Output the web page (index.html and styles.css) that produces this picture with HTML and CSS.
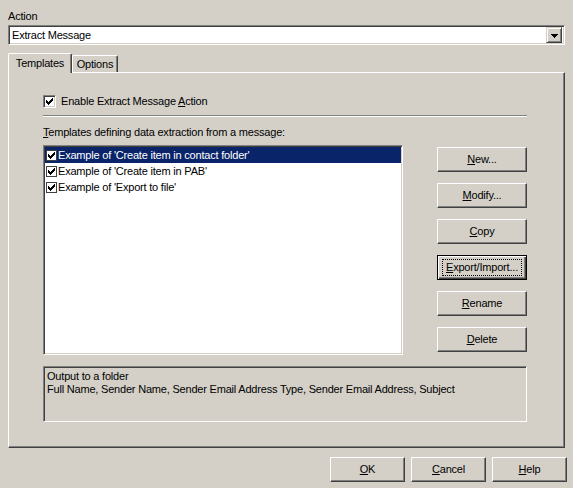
FILE: index.html
```html
<!DOCTYPE html>
<html>
<head>
<meta charset="utf-8">
<link rel="stylesheet" href="styles.css">
</head>
<body>
<div class="dialog">
  <div class="field-label">Action</div>
  <div class="combo">
    <span class="combo-text">Extract Message</span>
    <span class="combo-btn"><svg width="7" height="4" viewBox="0 0 7 4" shape-rendering="crispEdges"><path d="M0 0h7v1H0zM1 1h5v1H1zM2 2h3v1H2zM3 3h1v1H3z" fill="#000"/></svg></span>
  </div>
  <div class="tabs">
    <div class="tab active">Templates</div>
    <div class="tab">Options</div>
  </div>
  <div class="panel">
    <div class="check-row">
      <span class="checkbox"><svg width="7" height="7" viewBox="0 0 7 7" shape-rendering="crispEdges"><path d="M0 2h1v3H0zM1 3h1v3H1zM2 4h1v3H2zM3 3h1v3H3zM4 2h1v3H4zM5 1h1v3H5zM6 0h1v3H6z" fill="#000"/></svg></span>
      <span>Enable Extract Message <u>A</u>ction</span>
    </div>
    <div class="separator"></div>
    <div class="list-label"><u>T</u>emplates defining data extraction from a message:</div>
    <div class="main-row">
      <div class="list">
        <div class="item selected"><span class="mini-check"><svg width="7" height="7" viewBox="0 0 7 7" shape-rendering="crispEdges"><path d="M0 2h1v3H0zM1 3h1v3H1zM2 4h1v3H2zM3 3h1v3H3zM4 2h1v3H4zM5 1h1v3H5zM6 0h1v3H6z" fill="#000"/></svg></span><span class="item-text">Example of 'Create item in contact folder'</span></div>
        <div class="item"><span class="mini-check"><svg width="7" height="7" viewBox="0 0 7 7" shape-rendering="crispEdges"><path d="M0 2h1v3H0zM1 3h1v3H1zM2 4h1v3H2zM3 3h1v3H3zM4 2h1v3H4zM5 1h1v3H5zM6 0h1v3H6z" fill="#000"/></svg></span><span class="item-text">Example of 'Create item in PAB'</span></div>
        <div class="item"><span class="mini-check"><svg width="7" height="7" viewBox="0 0 7 7" shape-rendering="crispEdges"><path d="M0 2h1v3H0zM1 3h1v3H1zM2 4h1v3H2zM3 3h1v3H3zM4 2h1v3H4zM5 1h1v3H5zM6 0h1v3H6z" fill="#000"/></svg></span><span class="item-text">Example of 'Export to file'</span></div>
      </div>
      <div class="side-buttons">
        <div class="btn"><span><u>N</u>ew...</span></div>
        <div class="btn"><span><u>M</u>odify...</span></div>
        <div class="btn"><span><u>C</u>opy</span></div>
        <div class="btn default"><span class="focus"><u>E</u>xport/Import...</span></div>
        <div class="btn"><span><u>R</u>ename</span></div>
        <div class="btn"><span><u>D</u>elete</span></div>
      </div>
    </div>
    <div class="desc">Output to a folder<br>Full Name, Sender Name, Sender Email Address Type, Sender Email Address, Subject</div>
  </div>
  <div class="footer">
    <div class="btn wide"><span><u>O</u>K</span></div>
    <div class="btn wide"><span><u>C</u>ancel</span></div>
    <div class="btn wide"><span><u>H</u>elp</span></div>
  </div>
</div>
</body>
</html>
```
FILE: styles.css
```css
html, body {
  margin: 0;
  padding: 0;
}
body {
  width: 573px;
  height: 488px;
  background: #d4d0c8;
  font-family: "Liberation Sans", Arial, sans-serif;
  font-size: 11px;
  letter-spacing: -0.2px;
  color: #000;
  overflow: hidden;
}
u {
  text-decoration: underline;
  text-underline-offset: 1px;
}
.dialog {
  padding: 10px 8px 0 8px;
}
.field-label {
  height: 13px;
  line-height: 13px;
  margin-bottom: 2px;
}
.combo {
  box-sizing: border-box;
  height: 20px;
  display: flex;
  align-items: center;
  background: #fff;
  border-top: 1px solid #808080;
  border-left: 1px solid #808080;
  border-right: 1px solid #fff;
  border-bottom: 1px solid #fff;
  box-shadow: inset 1px 1px 0 #404040, inset -1px -1px 0 #d4d0c8;
  padding: 2px 2px 2px 3px;
}
.combo-text {
  flex: 1;
  line-height: 16px;
}
.combo-btn {
  box-sizing: border-box;
  width: 16px;
  height: 16px;
  background: #d4d0c8;
  border-top: 1px solid #d4d0c8;
  border-left: 1px solid #d4d0c8;
  border-right: 1px solid #404040;
  border-bottom: 1px solid #404040;
  box-shadow: inset 1px 1px 0 #fff, inset -1px -1px 0 #808080;
  display: flex;
  align-items: center;
  justify-content: center;
  padding-top: 1px;
}
.tabs {
  display: flex;
  align-items: flex-end;
  margin-top: 8px;
  height: 19px;
  position: relative;
  z-index: 2;
}
.tab {
  box-sizing: border-box;
  height: 17px;
  width: 46px;
  text-align: center;
  line-height: 13px;
  padding-top: 2px;
  border-top: 1px solid #fff;
  border-left: 1px solid #fff;
  border-right: 1px solid #404040;
  box-shadow: inset -1px 0 0 #808080;
  border-radius: 2px 2px 0 0;
  background: #d4d0c8;
}
.tab.active {
  height: 20px;
  width: 64px;
  margin-bottom: -1px;
  padding-top: 3px;
}
.panel {
  box-sizing: border-box;
  height: 376px;
  border-top: 1px solid #fff;
  border-left: 1px solid #fff;
  border-right: 1px solid #404040;
  border-bottom: 1px solid #404040;
  box-shadow: inset -1px -1px 0 #808080;
  padding: 22px 37px 0 34px;
  position: relative;
  z-index: 1;
}
.check-row {
  display: flex;
  align-items: center;
  height: 13px;
  line-height: 13px;
  gap: 5px;
}
.checkbox {
  box-sizing: border-box;
  width: 13px;
  height: 13px;
  background: #fff;
  border-top: 1px solid #808080;
  border-left: 1px solid #808080;
  border-right: 1px solid #fff;
  border-bottom: 1px solid #fff;
  box-shadow: inset 1px 1px 0 #404040, inset -1px -1px 0 #d4d0c8;
  display: flex;
  align-items: center;
  justify-content: center;
}
.separator {
  margin-top: 7px;
  border-top: 1px solid #808080;
  border-bottom: 1px solid #fff;
  height: 0;
}
.list-label {
  margin-top: 9px;
  height: 13px;
  line-height: 13px;
}
.main-row {
  margin-top: 6px;
  display: flex;
  gap: 34px;
}
.list {
  box-sizing: border-box;
  width: 360px;
  height: 210px;
  background: #fff;
  border-top: 1px solid #808080;
  border-left: 1px solid #808080;
  border-right: 1px solid #fff;
  border-bottom: 1px solid #fff;
  box-shadow: inset 1px 1px 0 #404040, inset -1px -1px 0 #d4d0c8;
  padding: 1px 1px;
}
.item {
  height: 16px;
  display: flex;
  align-items: center;
  padding-left: 1px;
  gap: 1px;
}
.item.selected {
  background: #0a246a;
  color: #fff;
}
.mini-check {
  box-sizing: border-box;
  width: 11px;
  height: 11px;
  background: #fff;
  border: 1px solid #404040;
  display: flex;
  align-items: center;
  justify-content: center;
}
.item-text {
  line-height: 16px;
}
.side-buttons {
  padding-top: 2px;
  display: flex;
  flex-direction: column;
  gap: 11px;
}
.btn {
  box-sizing: border-box;
  width: 90px;
  height: 25px;
  background: #d4d0c8;
  border-top: 1px solid #fff;
  border-left: 1px solid #fff;
  border-right: 1px solid #404040;
  border-bottom: 1px solid #404040;
  box-shadow: inset -1px -1px 0 #808080;
  display: flex;
  align-items: center;
  justify-content: center;
  line-height: 13px;
}
.btn.default {
  border: 1px solid #000;
  box-shadow: inset 1px 1px 0 #fff, inset -1px -1px 0 #404040, inset -2px -2px 0 #808080;
}
.focus {
  box-sizing: border-box;
  width: 78px;
  height: 15px;
  outline: 1px dotted #000;
  display: flex;
  align-items: center;
  justify-content: center;
}
.desc {
  box-sizing: border-box;
  margin-top: 11px;
  height: 56px;
  border-top: 1px solid #808080;
  border-left: 1px solid #808080;
  border-right: 1px solid #fff;
  border-bottom: 1px solid #fff;
  box-shadow: inset 1px 1px 0 #404040;
  padding: 3px 3px;
  line-height: 13px;
}
.footer {
  margin-top: 9px;
  margin-right: -2px;
  display: flex;
  justify-content: flex-end;
  gap: 6px;
}
.btn.wide {
  width: 75px;
}
```
